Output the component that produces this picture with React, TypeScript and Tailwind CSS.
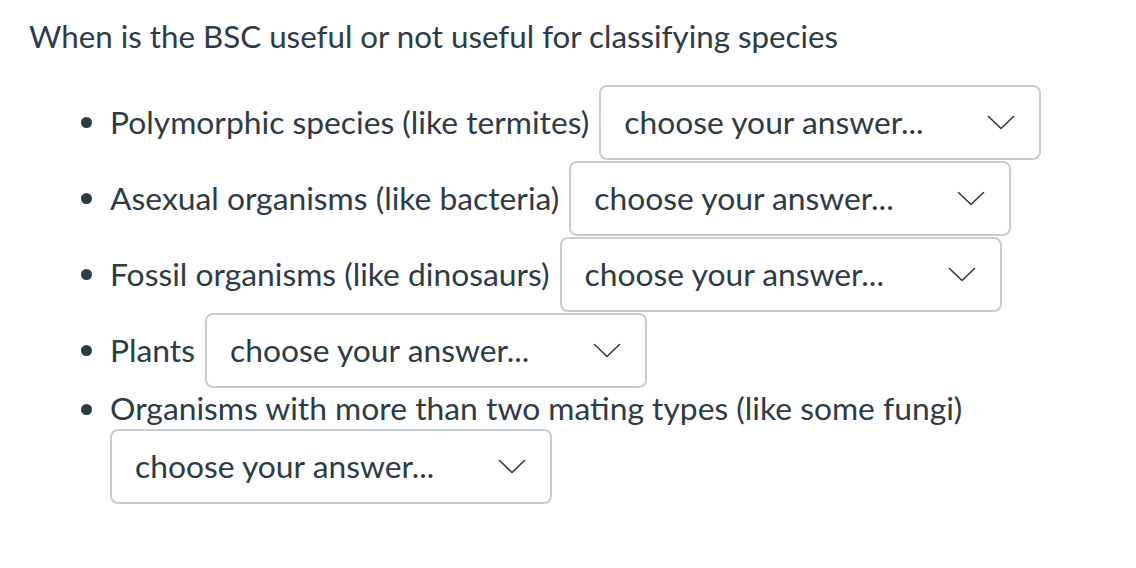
import React from "react";

function Chevron() {
  return (
    <svg width="28" height="16" viewBox="0 0 28 16" fill="none" className="shrink-0">
      <path d="M1.5 1.5 L14 13.5 L26.5 1.5" stroke="#2d3b45" strokeWidth="1.6" strokeLinecap="round" strokeLinejoin="round" />
    </svg>
  );
}

function Select() {
  return (
    <div className="w-[442px] h-[75px] shrink-0 border-2 border-[#c7cdd1] rounded-[8px] bg-white flex items-center justify-between pl-[23px] pr-[24px]">
      <span>choose your answer...</span>
      <Chevron />
    </div>
  );
}

function Bullet() {
  return <span className="w-[11px] h-[11px] rounded-full bg-[#2d3b45] shrink-0 mr-[18px]" />;
}

export default function App() {
  const rows = [
    { label: "Polymorphic species (like termites)" },
    { label: "Asexual organisms (like bacteria)" },
    { label: "Fossil organisms (like dinosaurs)" },
    { label: "Plants" },
  ];
  return (
    <div className="w-[1136px] h-[568px] bg-white text-[#2d3b45] text-[31.8px] leading-none" style={{ fontFamily: "Lato, 'Open Sans', sans-serif" }}>
      <div className="pl-[29px] pt-[18px]">
        <h1 className="text-[31.3px] font-normal leading-[36px]">When is the BSC useful or not useful for classifying species</h1>
        <ul className="mt-[31px] flex flex-col gap-[1px] pl-[52px]">
          {rows.map((r) => (
            <li key={r.label} className="flex items-center">
              <Bullet />
              <span className="mr-[10px]">{r.label}</span>
              <Select />
            </li>
          ))}
          <li className="flex flex-col">
            <div className="flex items-center h-[40px]">
              <Bullet />
              <span>Organisms with more than two mating types (like some fungi)</span>
            </div>
            <div className="pl-[29px]">
              <Select />
            </div>
          </li>
        </ul>
      </div>
    </div>
  );
}
